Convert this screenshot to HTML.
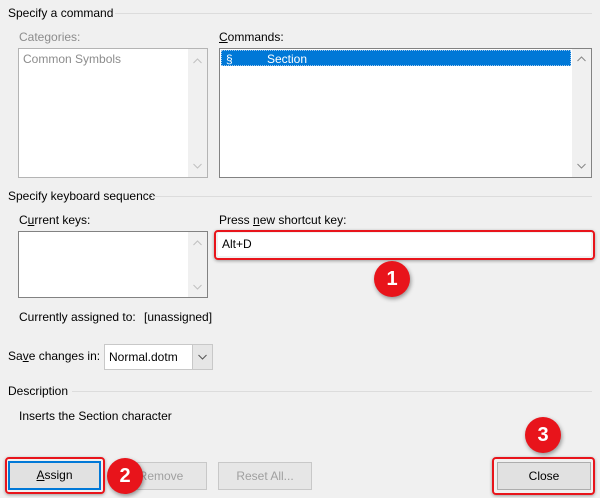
<!DOCTYPE html>
<html><head><style>
*{box-sizing:border-box;margin:0;padding:0}
body{width:600px;height:498px;background:#f0f0f0;font-family:"Liberation Sans",sans-serif;font-size:12px;color:#000;position:relative;overflow:hidden}
.a{position:absolute;white-space:nowrap}
.line{position:absolute;height:1px;background:#dcdcdc}
.box{position:absolute;background:#fff;border:1px solid #828282}
.sb{position:absolute;background:#f0f0f0}
.sb svg{position:absolute;left:5px}
.btn{position:absolute;background:#e1e1e1;border:1px solid #adadad;text-align:center;line-height:26px}
.dis{color:#a0a0a0;background:#e6e6e6;border-color:#c8c8c8}
.red{position:absolute;border:2px solid #e8141b;border-radius:4px;box-shadow:0 1px 3px rgba(0,0,0,.35)}
.c{position:absolute;width:36px;height:36px;border-radius:50%;background:#e8141b;color:#fff;font-weight:bold;font-size:20px;text-align:center;line-height:36px;box-shadow:1px 2px 4px rgba(0,0,0,.4)}
</style></head><body>
<div class="a" style="left:8px;top:6px">Specify a command</div><div class="line" style="left:115px;right:8px;top:13px"></div>
<div class="a" style="left:19px;top:30px;color:#8c8c8c">Categories:</div>
<div class="box" style="left:18px;top:48px;width:190px;height:130px;border-color:#b4b4b4"><div class="a" style="left:4px;top:3px;color:#8c8c8c">Common Symbols</div>
<div class="sb" style="right:0;top:0;width:19px;height:128px"><svg style="top:9px" width="9" height="6"><path d="M0.5 5L4.5 1L8.5 5" fill="none" stroke="#c0c0c0"/></svg><svg style="top:114px" width="9" height="6"><path d="M0.5 1L4.5 5L8.5 1" fill="none" stroke="#c0c0c0"/></svg></div></div>
<div class="a" style="left:219px;top:30px"><u>C</u>ommands:</div>
<div class="box" style="left:219px;top:48px;width:373px;height:130px"><div style="position:absolute;left:1px;top:1px;width:350px;height:16px;background:#0078d7;color:#fff;border:1px dotted #9ec8f0"><span class="a" style="left:4px;top:1px">§</span><span class="a" style="left:45px;top:1px">Section</span></div>
<div class="sb" style="right:0;top:0;width:19px;height:128px"><svg style="top:7px" width="9" height="6"><path d="M0.5 5L4.5 1L8.5 5" fill="none" stroke="#888"/></svg><svg style="top:114px" width="9" height="6"><path d="M0.5 1L4.5 5L8.5 1" fill="none" stroke="#888"/></svg></div></div>
<div class="a" style="left:8px;top:189px">Specify keyboard sequence</div><div class="line" style="left:152px;right:8px;top:196px"></div>
<div class="a" style="left:19px;top:213px">C<u>u</u>rrent keys:</div>
<div class="box" style="left:18px;top:231px;width:190px;height:67px"><div class="sb" style="right:0;top:0;width:19px;height:65px"><svg style="top:8px" width="9" height="6"><path d="M0.5 5L4.5 1L8.5 5" fill="none" stroke="#c0c0c0"/></svg><svg style="top:52px" width="9" height="6"><path d="M0.5 1L4.5 5L8.5 1" fill="none" stroke="#c0c0c0"/></svg></div></div>
<div class="a" style="left:219px;top:213px">Press <u>n</u>ew shortcut key:</div>
<div class="red" style="left:214px;top:230px;width:381px;height:30px"></div>
<div class="box" style="left:218px;top:233px;width:373px;height:23px;border-color:#fff"><div class="a" style="left:3px;top:3px">Alt+D</div></div>
<div class="c" style="left:374px;top:261px">1</div>
<div class="a" style="left:19px;top:310px">Currently assigned to:</div><div class="a" style="left:144px;top:310px">[unassigned]</div>
<div class="a" style="left:8px;top:349px">Sa<u>v</u>e changes in:</div>
<div class="box" style="left:104px;top:344px;width:109px;height:26px;border-color:#c8c8c8"><div class="a" style="left:4px;top:5px">Normal.dotm</div><div class="a" style="left:87px;top:0;width:20px;height:24px;background:#e6e6e6;border-left:1px solid #c8c8c8"><svg style="position:absolute;left:5px;top:9px" width="9" height="6"><path d="M0.5 1L4.5 5L8.5 1" fill="none" stroke="#555"/></svg></div></div>
<div class="a" style="left:8px;top:384px">Description</div><div class="line" style="left:72px;right:8px;top:391px"></div>
<div class="a" style="left:19px;top:409px">Inserts the Section character</div>
<div class="red" style="left:5px;top:457px;width:100px;height:37px"></div>
<div class="btn" style="left:8px;top:461px;width:93px;height:29px;border:2px solid #0078d7;line-height:25px"><u>A</u>ssign</div>
<div class="btn dis" style="left:115px;top:462px;width:92px;height:28px">Remove</div>
<div class="c" style="left:107px;top:458px">2</div>
<div class="btn dis" style="left:218px;top:462px;width:94px;height:28px">Reset All...</div>
<div class="red" style="left:492px;top:457px;width:103px;height:38px"></div>
<div class="btn" style="left:497px;top:462px;width:94px;height:28px">Close</div>
<div class="c" style="left:525px;top:417px">3</div>
</body></html>
